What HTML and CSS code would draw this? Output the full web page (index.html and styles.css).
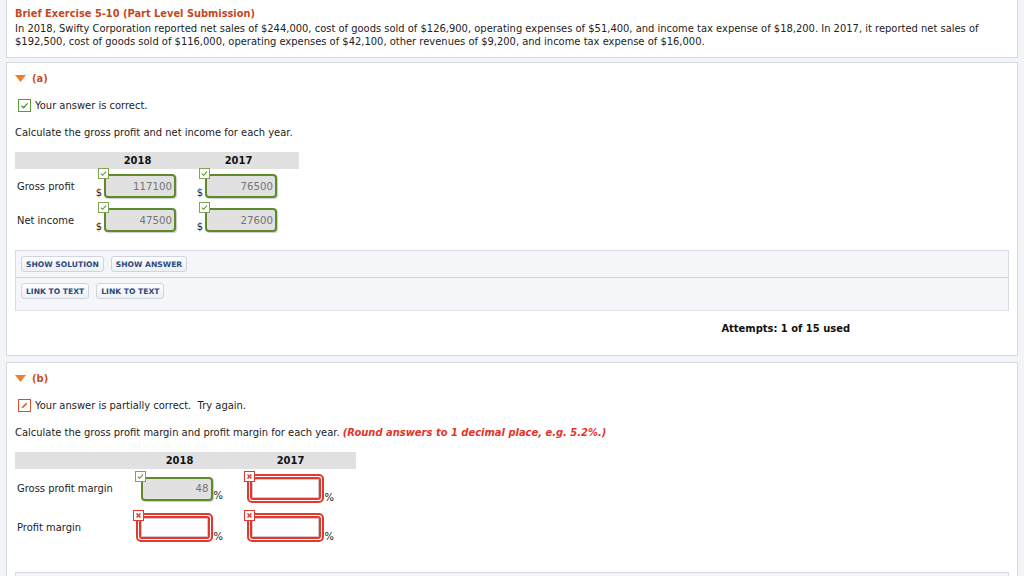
FILE: index.html
```html
<!DOCTYPE html>
<html lang="en">
<head>
    <meta charset="UTF-8">
    <meta name="viewport" content="width=device-width, initial-scale=1.0">
    <title>Brief Exercise 5-10</title>
    <link rel="stylesheet" href="styles.css">
</head>
<body>
    <div class="panel intro">
        <h2 class="title">Brief Exercise 5-10 (Part Level Submission)</h2>
        <p>In 2018, Swifty Corporation reported net sales of $244,000, cost of goods sold of $126,900, operating expenses of $51,400, and income tax expense of $18,200. In 2017, it reported net sales of $192,500, cost of goods sold of $116,000, operating expenses of $42,100, other revenues of $9,200, and income tax expense of $16,000.</p>
    </div>

    <div class="panel part">
        <div class="part-head">
            <svg class="caret" width="11" height="7" viewBox="0 0 11 7"><path d="M0 0H11L5.5 7Z" fill="#f07f2c"/></svg>
            <span>(a)</span>
        </div>
        <div class="status">
            <span class="mark mark-ok"><svg width="11" height="11" viewBox="0 0 11 11"><path d="M2.5 5.8L4.6 7.8L8.6 3.4" fill="none" stroke="#4f8f2a" stroke-width="1.3"/></svg></span>
            Your answer is correct.
        </div>
        <p class="question">Calculate the gross profit and net income for each year.</p>
        <table class="answers answers-a">
            <tr>
                <th class="lbl"></th>
                <th class="yr">2018</th>
                <th class="yr">2017</th>
                <th class="pad"></th>
            </tr>
            <tr>
                <td class="lbl">Gross profit</td>
                <td><div class="cell"><div class="entry"><span class="unit">$</span><span class="field"><i class="badge badge-ok"><svg width="9" height="9" viewBox="0 0 9 9"><path d="M1.8 4.6L3.6 6.3L7 2.6" fill="none" stroke="#5a9331" stroke-width="1.1"/></svg></i><input class="ok" type="text" value="117100" readonly></span></div></div></td>
                <td><div class="cell"><div class="entry"><span class="unit">$</span><span class="field"><i class="badge badge-ok"><svg width="9" height="9" viewBox="0 0 9 9"><path d="M1.8 4.6L3.6 6.3L7 2.6" fill="none" stroke="#5a9331" stroke-width="1.1"/></svg></i><input class="ok" type="text" value="76500" readonly></span></div></div></td>
                <td></td>
            </tr>
            <tr>
                <td class="lbl">Net income</td>
                <td><div class="cell"><div class="entry"><span class="unit">$</span><span class="field"><i class="badge badge-ok"><svg width="9" height="9" viewBox="0 0 9 9"><path d="M1.8 4.6L3.6 6.3L7 2.6" fill="none" stroke="#5a9331" stroke-width="1.1"/></svg></i><input class="ok" type="text" value="47500" readonly></span></div></div></td>
                <td><div class="cell"><div class="entry"><span class="unit">$</span><span class="field"><i class="badge badge-ok"><svg width="9" height="9" viewBox="0 0 9 9"><path d="M1.8 4.6L3.6 6.3L7 2.6" fill="none" stroke="#5a9331" stroke-width="1.1"/></svg></i><input class="ok" type="text" value="27600" readonly></span></div></div></td>
                <td></td>
            </tr>
        </table>
        <div class="tools">
            <div class="tool-row">
                <button>Show Solution</button>
                <button>Show Answer</button>
            </div>
            <div class="tool-row last">
                <button>Link to Text</button>
                <button>Link to Text</button>
            </div>
        </div>
        <div class="attempts">Attempts: 1 of 15 used</div>
    </div>

    <div class="panel part">
        <div class="part-head">
            <svg class="caret" width="11" height="7" viewBox="0 0 11 7"><path d="M0 0H11L5.5 7Z" fill="#f07f2c"/></svg>
            <span>(b)</span>
        </div>
        <div class="status">
            <span class="mark mark-partial"><svg width="11" height="11" viewBox="0 0 11 11"><path d="M3.2 7.8L7.8 3.2" fill="none" stroke="#d8502a" stroke-width="1.6"/></svg></span>
            Your answer is partially correct.&nbsp; Try again.
        </div>
        <p class="question">Calculate the gross profit margin and profit margin for each year. <em class="hint">(Round answers to 1 decimal place, e.g. 5.2%.)</em></p>
        <table class="answers answers-b">
            <tr>
                <th class="lbl"></th>
                <th class="yr">2018</th>
                <th class="yr">2017</th>
                <th class="pad"></th>
            </tr>
            <tr>
                <td class="lbl">Gross profit margin</td>
                <td><div class="cell"><div class="entry"><span class="field"><i class="badge badge-ok"><svg width="9" height="9" viewBox="0 0 9 9"><path d="M1.8 4.6L3.6 6.3L7 2.6" fill="none" stroke="#5a9331" stroke-width="1.1"/></svg></i><input class="ok" type="text" value="48" readonly></span><span class="unit pct">%</span></div></div></td>
                <td><div class="cell"><div class="entry"><span class="field bad"><i class="badge badge-bad"><svg width="9" height="9" viewBox="0 0 9 9"><path d="M2.5 2.5L6.5 6.5M6.5 2.5L2.5 6.5" fill="none" stroke="#e2382d" stroke-width="1.5"/></svg></i><input type="text" value=""></span><span class="unit pct">%</span></div></div></td>
                <td></td>
            </tr>
            <tr>
                <td class="lbl">Profit margin</td>
                <td><div class="cell"><div class="entry"><span class="field bad"><i class="badge badge-bad"><svg width="9" height="9" viewBox="0 0 9 9"><path d="M2.5 2.5L6.5 6.5M6.5 2.5L2.5 6.5" fill="none" stroke="#e2382d" stroke-width="1.5"/></svg></i><input type="text" value=""></span><span class="unit pct">%</span></div></div></td>
                <td><div class="cell"><div class="entry"><span class="field bad"><i class="badge badge-bad"><svg width="9" height="9" viewBox="0 0 9 9"><path d="M2.5 2.5L6.5 6.5M6.5 2.5L2.5 6.5" fill="none" stroke="#e2382d" stroke-width="1.5"/></svg></i><input type="text" value=""></span><span class="unit pct">%</span></div></div></td>
                <td></td>
            </tr>
        </table>
        <div class="tools tools-b">
            <div class="tool-row spacer"></div>
        </div>
    </div>
</body>
</html>
```

FILE: styles.css
```css
body {
    margin: 0;
    padding: 0 6px;
    background-color: #f4f5f8;
    font-family: "DejaVu Sans", Verdana, sans-serif;
    font-size: 9.95px;
    line-height: 13px;
    color: #222222;
}
.panel {
    background: #ffffff;
    border: 1px solid #d5d9e1;
}
.intro {
    border-top: none;
    padding: 7px 8px 9px;
    margin-bottom: 4px;
}
.title {
    margin: 0;
    font-size: 9.85px;
    line-height: 13px;
    font-weight: bold;
    color: #c4481c;
}
.intro p {
    margin: 2px 0 0;
}
.part {
    padding: 9px 8px 20px;
    margin-bottom: 6px;
}
.part-head {
    display: flex;
    align-items: center;
    height: 13px;
    font-weight: bold;
    color: #c8501f;
}
.caret {
    margin-right: 6px;
}
.status {
    display: flex;
    align-items: center;
    margin-top: 14px;
    height: 13px;
}
.mark {
    display: flex;
    align-items: center;
    justify-content: center;
    width: 13px;
    height: 13px;
    box-sizing: border-box;
    margin: 0 4px 0 3px;
    background: #ffffff;
}
.mark-ok {
    border: 1px solid #5f9a33;
}
.mark-partial {
    border: 1px solid #d8502a;
}
.question {
    margin: 14px 0 0;
}
.hint {
    color: #e5332a;
    font-weight: bold;
}
.answers {
    border-collapse: collapse;
    table-layout: fixed;
    margin-top: 13px;
}
.answers th {
    background: #e1e1e1;
    height: 17px;
    padding: 0;
    font-weight: bold;
    text-align: center;
    color: #111111;
}
.answers td {
    padding: 0;
}
.answers td.lbl {
    padding-left: 2px;
}
.answers th.pad {
    width: 10px;
}
.answers-a th.lbl {
    width: 72px;
}
.answers-a th.yr {
    width: 101px;
}
.answers-a td {
    height: 34px;
}
.answers-b th.lbl {
    width: 109px;
}
.answers-b th.yr {
    width: 111px;
}
.answers-b td {
    height: 39px;
}
.cell {
    display: flex;
    justify-content: flex-end;
    align-items: center;
    padding-right: 12px;
}
.entry {
    display: flex;
    align-items: flex-end;
}
.unit {
    line-height: 11px;
    margin-right: 2px;
}
.pct {
    margin: 0 0 0 1px;
}
.field {
    position: relative;
    display: block;
}
.field input {
    display: block;
    box-sizing: border-box;
    font-family: "DejaVu Sans", Verdana, sans-serif;
    font-size: 10.2px;
    margin: 0;
    outline: none;
}
input.ok {
    width: 72px;
    height: 24px;
    padding: 0 2px;
    border: 2px solid #5f8a2c;
    border-radius: 4px;
    background: #e1e1e1;
    color: #747474;
    text-align: right;
    box-shadow: 1px 1px 1px rgba(0, 0, 0, 0.2);
}
.field.bad {
    width: 77px;
    height: 29px;
    box-sizing: border-box;
    padding: 1px;
    border: 2px solid #e2382d;
    border-radius: 5px;
    background: #ffffff;
}
.field.bad input {
    width: 100%;
    height: 100%;
    border: 2px solid #e2382d;
    border-radius: 3px;
    background: #ffffff;
    box-shadow: inset 0 0 0 1px #d6c8c8;
}
.badge {
    position: absolute;
    top: -6px;
    left: -6px;
    z-index: 1;
    display: flex;
    align-items: center;
    justify-content: center;
    width: 11px;
    height: 11px;
    box-sizing: border-box;
    background: #ffffff;
}
.badge-ok {
    border: 1px solid #7fa553;
}
.badge-bad {
    top: -5px;
    left: -5px;
    border: 1px solid #e2382d;
}
.tools {
    margin-top: 13px;
    background: #f5f6f9;
    border: 1px solid #d6dae2;
    border-bottom: 1px solid #e2e5ea;
}
.tools-b {
    margin-top: 25px;
}
.tool-row {
    display: flex;
    padding: 5px;
    border-bottom: 1px solid #d3d7df;
}
.tool-row.last {
    border-bottom: none;
    padding-bottom: 11px;
}
.tool-row.spacer {
    height: 16px;
    border-bottom: none;
}
button {
    height: 16px;
    padding: 0 4px;
    margin-right: 7px;
    font-family: "DejaVu Sans", Verdana, sans-serif;
    font-size: 7.6px;
    font-weight: bold;
    text-transform: uppercase;
    color: #2c4a7e;
    background: linear-gradient(#fdfdfe, #edf0f4);
    border: 1px solid #d0d5dd;
    border-radius: 3px;
    cursor: pointer;
}
.attempts {
    margin-top: 11px;
    text-align: right;
    padding-right: 159px;
    font-weight: bold;
    color: #111111;
}
```
